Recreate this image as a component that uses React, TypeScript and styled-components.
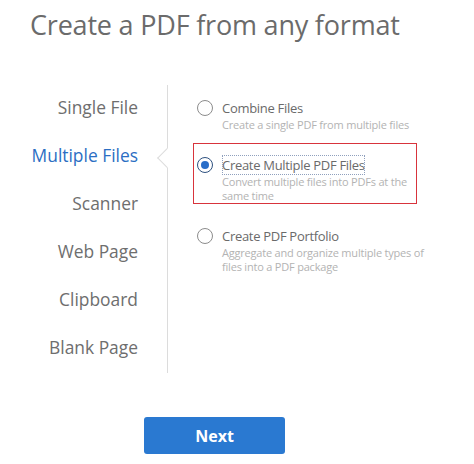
import React from "react"
import styled, { createGlobalStyle } from "styled-components"

const GlobalStyle = createGlobalStyle`
  body {
    margin: 0;
    background: #fff;
    font-family: "Open Sans", "Noto Sans", sans-serif;
  }
`

const Page = styled.div`
  width: 474px;
  height: 464px;
  display: flex;
  flex-direction: column;
  overflow: hidden;
`

const Title = styled.h1`
  margin: 0;
  padding: 6px 0 0 30px;
  height: 77px;
  box-sizing: border-box;
  font-size: 27px;
  font-weight: 400;
  line-height: 38px;
  color: #6b6b6b;
  letter-spacing: -0.2px;
`

const Body = styled.div`
  display: flex;
  flex-direction: row;
  height: 296px;
`

const Nav = styled.nav`
  width: 168px;
  box-sizing: border-box;
  border-right: 1px solid #dcdcdc;
  padding: 0 29px 0 0;
  margin-top: 8px;
  height: 288px;
  display: flex;
  flex-direction: column;
`

const NavItem = styled.div<{ $active?: boolean }>`
  position: relative;
  height: 48px;
  line-height: 44px;
  text-align: right;
  font-size: 17.4px;
  color: ${(p) => (p.$active ? "#2b6ec3" : "#6e6e6e")};
`

const Notch = styled.span`
  position: absolute;
  right: -36px;
  top: 18px;
  width: 13px;
  height: 13px;
  background: #fff;
  border-left: 1px solid #dcdcdc;
  border-bottom: 1px solid #dcdcdc;
  transform: rotate(45deg);
`

const Options = styled.div`
  padding: 9px 0 0 25px;
  display: flex;
  flex-direction: column;
  gap: 10px;
`

const Option = styled.div<{ $selected?: boolean }>`
  width: 224px;
  box-sizing: border-box;
  border: 1px solid ${(p) => (p.$selected ? "#d8343c" : "transparent")};
  padding: 11px 0 0 3px;
  display: grid;
  grid-template-columns: 16px 1fr;
  column-gap: 9px;
`

const Radio = styled.span<{ $checked?: boolean }>`
  width: 16px;
  height: 16px;
  margin-top: 2px;
  box-sizing: border-box;
  border-radius: 50%;
  border: 1.5px solid ${(p) => (p.$checked ? "#2e5180" : "#8c8c8c")};
  display: flex;
  align-items: center;
  justify-content: center;
  &::after {
    content: "";
    display: ${(p) => (p.$checked ? "block" : "none")};
    width: 8px;
    height: 8px;
    border-radius: 50%;
    background: #2a6ec8;
  }
`

const Label = styled.span<{ $focused?: boolean }>`
  justify-self: start;
  font-size: 13px;
  line-height: 20px;
  height: 20px;
  letter-spacing: -0.3px;
  color: #6a6a6a;
  ${(p) => (p.$focused ? "outline: 1px dotted #8fa0bd; outline-offset: -1px;" : "")}
`

const Desc = styled.div`
  grid-column: 2;
  width: 210px;
  font-size: 11px;
  line-height: 14px;
  letter-spacing: -0.2px;
  color: #b3b3b3;
`

const Footer = styled.div`
  display: flex;
  padding: 44px 0 0 144px;
`

const NextButton = styled.button`
  width: 141px;
  height: 37px;
  border: none;
  border-radius: 3px;
  background: #2a79d1;
  color: #fff;
  font-family: "Open Sans", sans-serif;
  font-weight: 700;
  font-size: 16px;
`

const navItems = ["Single File", "Multiple Files", "Scanner", "Web Page", "Clipboard", "Blank Page"]

const options = [
  { label: "Combine Files", desc: "Create a single PDF from multiple files" },
  { label: "Create Multiple PDF Files", desc: "Convert multiple files into PDFs at the same time" },
  { label: "Create PDF Portfolio", desc: "Aggregate and organize multiple types of files into a PDF package" },
]

export default function App() {
  const active = 1
  const selected = 1
  return (
    <Page>
      <GlobalStyle />
      <Title>Create a PDF from any format</Title>
      <Body>
        <Nav>
          {navItems.map((item, i) => (
            <NavItem key={item} $active={i === active}>
              {item}
              {i === active && <Notch />}
            </NavItem>
          ))}
        </Nav>
        <Options>
          {options.map((o, i) => (
            <Option key={o.label} $selected={i === selected}>
              <Radio $checked={i === selected} />
              <Label $focused={i === selected}>{o.label}</Label>
              <Desc>{o.desc}</Desc>
            </Option>
          ))}
        </Options>
      </Body>
      <Footer>
        <NextButton>Next</NextButton>
      </Footer>
    </Page>
  )
}
